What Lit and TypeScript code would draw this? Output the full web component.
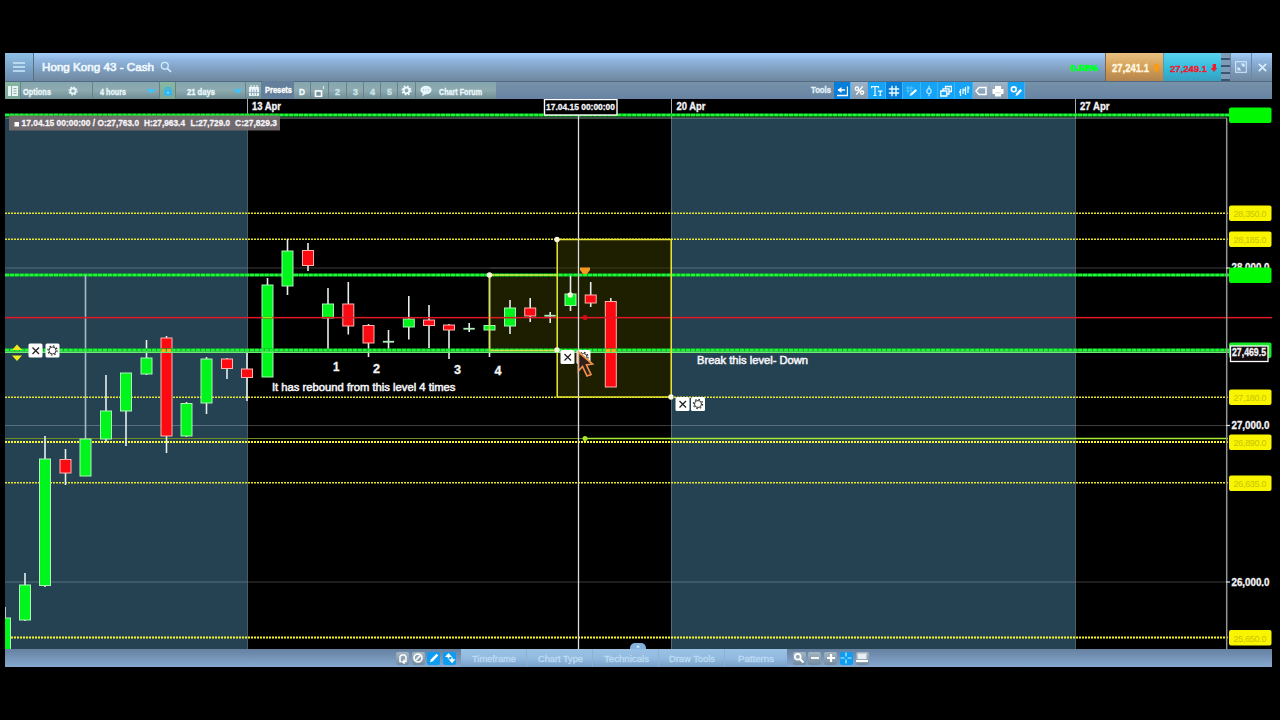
import { LitElement, html, svg, css } from "lit";
import { customElement } from "lit/decorators.js";

type Candle = [number, number, number, number, number, "g" | "r"];

// centre x, body top, body bottom, high, low, direction
const CANDLES: Candle[] = [
  [5, 618, 660, 607, 660, "g"],
  [25, 585, 620, 573, 621, "g"],
  [45, 459, 585.5, 436, 587, "g"],
  [65.5, 459.5, 473, 449, 485, "r"],
  [85.5, 439, 476, 275, 476, "g"],
  [106, 411, 439, 375, 442, "g"],
  [126, 373, 411, 373, 446, "g"],
  [146.5, 358, 374, 340, 375, "g"],
  [166.5, 338, 436, 336, 453, "r"],
  [186.5, 403.5, 436, 402, 437, "g"],
  [206.5, 359, 403, 357, 414, "g"],
  [227, 359, 368.5, 358, 379, "r"],
  [247, 369, 377.5, 353, 401, "r"],
  [267.5, 285, 377, 278, 377, "g"],
  [287.5, 251, 286, 239, 295, "g"],
  [308, 250.5, 265.5, 243, 271, "r"],
  [328, 304, 318, 288, 350, "g"],
  [348.3, 304, 326, 282, 334.5, "r"],
  [368.5, 325.5, 343, 324, 357, "r"],
  [388.5, 341, 342.5, 330, 350, "g"],
  [408.8, 319, 327, 296, 339.5, "g"],
  [429, 320, 325.5, 305, 348, "r"],
  [449, 325, 330, 324, 359, "r"],
  [469.2, 328, 329.5, 323, 332, "g"],
  [489.5, 325.5, 330, 275, 357, "g"],
  [510, 308, 326, 300, 334, "g"],
  [530.2, 308, 316, 298, 322, "r"],
  [550.2, 315, 316.5, 312, 323, "g"],
  [570.5, 294, 305.5, 276, 311, "g"],
  [590.7, 295, 303, 282, 307, "r"],
  [610.8, 301.5, 387, 298, 387, "r"],
];

const GEAR = svg`<circle cx="6" cy="6" r="3.100" fill="none" stroke="currentColor" stroke-width="2"/>
  <circle cx="6" cy="6" r="4.700" fill="none" stroke="currentColor" stroke-width="1.600" stroke-dasharray="1.850 1.850"/>`;

const icon = (body: unknown, size = 12) =>
  html`<svg width=${size} height=${size} viewBox="0 0 12 12">${body}</svg>`;

const label = (text: string, width: number, size: number, cls = "") =>
  html`<svg class="label ${cls}" width=${width} height="16" viewBox="0 0 ${width} 16">
    <text x="0" y="11.5" font-size=${size} textLength=${width} lengthAdjust="spacingAndGlyphs">${text}</text>
  </svg>`;

const I = {
  panel: svg`<path d="M1 1h10v10H1z" fill="#e9f6f3"/><path d="M4.500 1v10M6.500 3.500h3M6.500 6h3M6.500 8.500h3" stroke="#89aaad" stroke-width="1"/>`,
  down: svg`<path d="M.5 3.500h11L6 9.500z" fill="#3cc4fa"/>`,
  lock: svg`<path d="M1.500 4.500h9v7h-9z" fill="#2db8f5"/><path d="M4 5V2h4v3" fill="none" stroke="#2db8f5" stroke-width="1.800"/><path d="M5 7h2v2H5z" fill="#8be4f5"/>`,
  cal: svg`<path d="M1 2h10v9H1z" fill="#e6f3f8"/><path d="M3 0v3M6 0v3M9 0v3" stroke="#fff"/><path d="M3.500 4.500v6M6 4.500v6M8.500 4.500v6M1 7.500h10" stroke="#88a5b7" stroke-width=".8"/>`,
  chat: svg`<ellipse cx="6" cy="5" rx="5.600" ry="4.200" fill="#e6f7fb"/><path d="M3 8l-1 3.500L6 9z" fill="#e6f7fb"/><path d="M3 5h1M5.500 5h1M8 5h1" stroke="#8cabb9"/>`,
  back: svg`<path d="M2 5h7M1 10.500h10.500V1.500" fill="none" stroke="#fff" stroke-width="1.300"/><path d="M5.500 2v6L1.500 5z" fill="#fff"/>`,
  pct: svg`<path d="M2.500 10.500L9.500 1.500" stroke="#fff" stroke-width="1.500"/><circle cx="3.200" cy="4" r="1.800" fill="none" stroke="#fff" stroke-width="1.500"/><circle cx="8.800" cy="8.300" r="1.800" fill="none" stroke="#fff" stroke-width="1.500"/>`,
  type: svg`<path d="M.5 3.200V1.700h7v1.500M4 2v8.500M2.500 10.500h3M7 6.200h4.600M9.300 6v4.500M8.300 10.500h2" stroke="#e8fbff" stroke-width="1.200" fill="none"/>`,
  hash: svg`<path d="M4 .8v10.400M8 .8v10.400M.8 4h10.400M.8 8h10.400" stroke="#e9faff" stroke-width="1.400"/>`,
  gridpen: svg`<path d="M3 1v8M6 1v5M1 3h8M1 6h6" stroke="#5cc6f7" stroke-width=".9"/><path d="M4.500 11l1-2.500 5-4.500 1.500 1.700-5 4.500z" fill="#e8fbff"/>`,
  candle: svg`<path d="M6 .8v2.200M6 9v2.200M6 3L8 5v2.500L6 9 4 7.500V5z" stroke="#a8e9ff" stroke-width="1.300" fill="none"/>`,
  layers: svg`<path d="M.8 6h6v5h-6zM3 6V3.800h6V9H7M5.500 3.800V1.500h6v5H9" fill="none" stroke="#fff" stroke-width="1.300"/>`,
  bars: svg`<path d="M2.500 4v7M1 7h1.500M5 3.500V9M5 5h2M7.500 2v8M10 1v7M10 3h1.500" stroke="#dff8ff" stroke-width="1.300"/>`,
  tag: svg`<path d="M1 6l3-3.500h7v7H4z" fill="none" stroke="#fff" stroke-width="1.500"/>`,
  print: svg`<path d="M3 1h6v3h2.500v5H9v2.500H3V9H.5V4H3z" fill="#fff"/><path d="M3.500 7.800h5" stroke="#c4d2de"/>`,
  cogpen: svg`<circle cx="3.800" cy="4.300" r="2.400" fill="none" stroke="#fff" stroke-width="1.600"/><path d="M5.500 11l.8-2.700 4-4.300 1.700 1.700-4.200 4.500z" fill="#fff"/>`,
  search: svg`<circle cx="4.800" cy="4.800" r="3.400" fill="none" stroke="#cfe9ff" stroke-width="1.400"/><path d="M7.300 7.300L11 11" stroke="#cfe9ff" stroke-width="1.700"/>`,
  zoom: svg`<circle cx="4.800" cy="4.800" r="2.900" fill="none" stroke="#fff" stroke-width="1.700"/><path d="M7 7l3.500 3.500" stroke="#fff" stroke-width="2"/>`,
  reload: svg`<path d="M4.500 9.500H3V4.500L4.500 3H7.500L9 4.500V9.500H7M7 7.500v3.500L5 9.500" fill="none" stroke="#fff" stroke-width="1.500"/>`,
  ban: svg`<circle cx="6" cy="6" r="4" fill="none" stroke="#fff" stroke-width="1.600"/><path d="M3.500 8.500l5-5" stroke="#fff" stroke-width="1.600"/>`,
  pen: svg`<path d="M2 10.200l1-3 5.500-5.400L10.300 3.500 4.800 9.200z" fill="#fff"/>`,
  updown: svg`<path d="M4.500 1L8 5H1zM8 11.200L11.500 7.200H4.500z" fill="#fff"/><path d="M4.500 4.500v2M8 5.500v2" stroke="#fff" stroke-width="1.600"/>`,
  minus: svg`<path d="M2 6h8" stroke="#fff" stroke-width="1.800"/>`,
  plus: svg`<path d="M2 6h8M6 2v8" stroke="#fff" stroke-width="2.200"/>`,
  cross: svg`<path d="M6 .5v4M6 7.500v4M.5 6h4M7.500 6h4" stroke="#c2f2ff" stroke-width="1.200"/>`,
  screen: svg`<path d="M1.500 1.500h9v5.500h-9z" fill="#e6eef4"/><path d="M0 9h12" stroke="#fff" stroke-width="2.200"/>`,
};

@customElement("app-root")
export class AppRoot extends LitElement {
  static styles = css`
    :host { display: flex; flex-direction: column; box-sizing: border-box; width: 1280px; height: 720px;
      padding: 53px 8px 53px 5px; background: #000; color: #fff; font-family: "Liberation Sans", Arial, sans-serif; overflow: hidden; }
    svg { display: block; flex: none; }
    .label { overflow: visible; }
    .label text { fill: currentColor; stroke: currentColor; stroke-width: .35px; font-weight: 700; }
    .label.thin text { font-weight: 400; stroke-width: .65px; }
    .label.faint text { stroke-width: .3px; }
    .header { display: flex; height: 28px; flex: none; background: linear-gradient(#a3cffa 0, #8fb5df 25%, #7895b1 75%, #6f87a0); }
    .burger { width: 28px; display: flex; align-items: center; justify-content: center; border-right: 1px solid #566f8b; background: linear-gradient(#8fc0e6, #6b8bad); }
    .title { display: flex; align-items: center; gap: 6px; padding-left: 8px; flex: 1; color: #edf8ff; }
    .change { display: flex; align-items: center; color: #00ff2a; padding-right: 7px; }
    .change .label text { stroke-width: .7px; }
    .price { display: flex; align-items: center; width: 57px; box-sizing: border-box; padding: 1px 0 0 6px; gap: 3px; }
    .sell { background: linear-gradient(#e9c184, #cf9b51 60%, #b28350); border-left: 1px solid #7b6550; color: #fff7e0; width: 58px; }
    .buy { background: linear-gradient(#5bd3ee, #30bada 60%, #3a9ec0); color: #f01d2e; width: 58px; border-left: 1px solid #5c98a5; }
    .grip { width: 9px; background: repeating-linear-gradient(#7e9bb8 0 5px, #3d566f 5px 7px); }
    .wbtn { width: 21px; display: flex; align-items: center; justify-content: center; color: #d9ecff; border-left: 1px solid #6c87a8; box-sizing: border-box; }
    .toolbar { display: flex; flex: none; background: linear-gradient(#7792a9, #6683a3); border-top: 1px solid #536b82; box-sizing: border-box; height: 18px; }
    .seg { display: flex; align-items: center; box-sizing: border-box; border-right: 1px solid #66818f; background: linear-gradient(#86a6ae, #8daaaf 50%, #6e8b94); justify-content: space-between; color: #eaf8fc; flex: none; }
    .seg.num { justify-content: center; color: #c8e4ec; }
    .seg.bright { color: #f2fbff; }
    .seg.start { background: linear-gradient(#88b9a2, #7ba598); }
    .plain { display: flex; align-items: flex-start; justify-content: center; width: 32px; background: #637f9b; padding-bottom: 2px; box-sizing: border-box; margin-top: -1px; }
    .w16 { width: 16px; justify-content: center; }
    .opts { width: 72px; padding: 0 14px 0 2px; }
    .hours { width: 67px; padding: 0 3px 0 7px; }
    .days { width: 70px; padding: 0 2px 0 11px; }
    .w17 { width: 17px; }
    .w18 { width: 18px; }
    .forum { width: 80px; padding: 0 14px 0 4px; border: 0; }
    .tools { display: flex; margin-left: auto; margin-right: 247px; align-items: center; }
    .tools .label { margin: -3px 3px 0 0; color: #e6f2fa; }
    .tool { width: 17.400px; height: 17px; display: flex; align-items: center; justify-content: center; box-sizing: border-box; background: #16a2f5; border-right: 1px solid #3db5f7; }
    .tool.dark { background: #087edb; }
    .tool.gray { background: linear-gradient(#9db4c8, #8299af); border-color: #8da4ba; }
    .chart { width: 1267px; height: 550px; }
    .chart text { font-size: 10px; fill: #f4f4f8; stroke: #f4f4f8; stroke-width: .3px; }
    .footer { position: relative; display: flex; height: 18px; box-sizing: border-box; align-items: center; padding-left: 391px; background: linear-gradient(#6680a0, #86a9d0); }
    .mini { width: 13px; height: 13px; display: flex; align-items: center; justify-content: center; background: linear-gradient(#a5b6c3, #738ba0); border-radius: 2px; margin-right: 2.700px; }
    .mini.on { background: #0d9cf2; }
    .tabs { display: flex; width: 326px; height: 18px; margin: 0 6px 0 2px; background: linear-gradient(#9bc2e4, #91b9df 55%, #779ec6); }
    .tab { width: 66px; box-sizing: border-box; display: flex; align-items: center; justify-content: center; border-right: 1px solid #8cb1d4; color: #bddcf4; padding-left: 2px; }
    .tab:last-child { border: 0; width: 62px; padding: 0; }
    .handle { position: absolute; left: 625px; top: -6px; width: 16px; height: 6px; border-radius: 5px 5px 0 0; background: #83b2dc; display: flex; justify-content: center; }
  `;

  private seg(cls: string, body: unknown) {
    return html`<div class="seg ${cls}">${body}</div>`;
  }

  private candle([x, top, bottom, high, low, dir]: Candle) {
    const doji = bottom - top < 3;
    return svg`<path d="M${x} ${high}V${low}" stroke=${x === 85.5 ? "#a9b9c1" : "#e4efee"} stroke-width="1.600"/>
      <rect x=${x - 5.5} y=${top} width="11" height=${bottom - top} fill=${doji ? "#b7e8bd" : dir === "g" ? "#00f51c" : "#fb0a12"}
        stroke=${dir === "g" ? "#a8f7b5" : "#ffb2ae"} stroke-width=${doji ? 0.3 : 1}/>`;
  }

  private dotted(y: number, thick = false) {
    return svg`<path d="M5 ${y + 0.3}H1228" stroke=${thick ? "#f7f72c" : "#e6e62a"} stroke-width=${thick ? 2 : 1.5} stroke-dasharray="2 1"/>`;
  }

  private green(y: number) {
    return svg`<path d="M5 ${y}H1229" stroke="#07a51c" stroke-width="3.200"/>
      <path d="M5 ${y}H1229" stroke="#20f53a" stroke-width="2.600" stroke-dasharray="4 .9"/>`;
  }

  private button(x: number, y: number, gear: boolean) {
    return svg`<g transform="translate(${x} ${y})"><rect width="14" height="14" rx="1.500" fill="#fff"/>
      ${gear
        ? svg`<circle cx="7" cy="7" r="3.500" fill="none" stroke="#333" stroke-width="1"/><circle cx="7" cy="7" r="4.600" fill="none" stroke="#333" stroke-width="1.200" stroke-dasharray="1.600 2"/>`
        : svg`<path d="M4 4l6.500 6.500M10.500 4L4 10.500" stroke="#222" stroke-width="1.300"/>`}</g>`;
  }

  private badge(y: number, color: string, text = "") {
    return svg`<rect x="1229" y=${y - 7.5} width="42.500" height="15.500" rx="2" fill=${color}/>
      ${text ? svg`<text x="1233.500" y=${y + 4} textLength="33" style="fill:#cbc400;stroke:none;font-size:9px">${text}</text>` : ""}`;
  }

  private text(x: number, y: number, width: number, value: string, size = 10, weight = 700) {
    return svg`<text x=${x} y=${y} textLength=${width} lengthAdjust="spacingAndGlyphs" font-weight=${weight}
      style="font-size:${size}px;stroke-width:${weight === 400 ? 0.5 : 0.3}px">${value}</text>`;
  }

  private chart() {
    return html`<svg class="chart" viewBox="5 99 1267 550" preserveAspectRatio="none">
      <rect x="5" y="99" width="1267" height="550" fill="#000"/>
      <rect x="5" y="118" width="242.500" height="531" fill="#254252"/>
      <rect x="671" y="118" width="404.500" height="531" fill="#254252"/>
      ${[268, 425.5, 582].map((y) => svg`<path d="M5 ${y}H1228" stroke="#fff" stroke-opacity=".24"/>`)}
      ${[247.5, 671.5, 1075.5].map((x) => svg`<path d="M${x} 99V118" stroke="#a5adb1"/><path d="M${x} 118V649" stroke="#87969c" stroke-opacity=".5"/>`)}
      <path d="M5 118H1227" stroke="#7f9188"/>
      ${this.green(115)}
      ${this.dotted(213)}${this.dotted(239)}${this.dotted(397)}${this.dotted(441.7, true)}${this.dotted(482.5)}${this.dotted(637.2, true)}
      <rect x="490" y="275" width="67" height="75.500" fill="#1d1d00"/>
      <rect x="557" y="239" width="114" height="158" fill="#1e1e00"/>
      <path d="M490 268H671" stroke="#fff" stroke-opacity=".13"/>
      <path d="M5 438.500H585" stroke="#6d8c25"/>
      <path d="M585 438.500H1228" stroke="#a2ea35" stroke-width="1.400"/>
      ${this.green(275)}
      ${CANDLES.map((c) => this.candle(c))}
      <rect x="5" y="316.900" width="1267" height="1.500" fill="#e01826"/>
      ${this.green(350)}
      <path d="M5 352.300H1229" stroke="#68ef72" stroke-width="1.400"/>
      <path d="M161.500 350.500h10M606 350.500h10" stroke="#ffae14" stroke-width="3" stroke-dasharray="4 1.500"/>
      <path d="M262.500 317.500h10" stroke="#a6e51c"/>
      <path d="M489.500 350V275H557M489.500 350.500H557" fill="none" stroke="#cfe344" stroke-width="1.400"/>
      <rect x="557.200" y="239.500" width="114" height="157.500" fill="none" stroke="#eaea31" stroke-width="1.500"/>
      ${[[557, 239.5], [489.5, 275], [557, 350], [671, 397], [570.3, 295]].map(([x, y]) => svg`<circle cx=${x} cy=${y} r="2.700" fill="#f7f7dc"/>`)}
      <circle cx="585" cy="317.500" r="2.500" fill="#d60d17"/><circle cx="585" cy="438.500" r="2.500" fill="#a5e832"/>
      <path d="M580 267.500h10v2.500l-3 4h-4l-3-4z" fill="#f49a20"/>
      <path d="M578.500 115V649" stroke="#dcdcdc" stroke-width="1.300"/>
      ${this.button(560.5, 350, false)}${this.button(576.5, 350, true)}
      <path d="M578.500 352l14 12-6 1 4.500 9.500-4 1.500-4.500-9.500-4 4.500z" fill="#33201a" stroke="#ef9148" stroke-width="1.700"/>
      <path d="M578.300 350V378" stroke="#c8c8c8" stroke-width=".9"/>
      ${this.button(675.5, 397, false)}${this.button(691, 397, true)}
      ${this.button(28.5, 343.5, false)}${this.button(45.5, 343.5, true)}
      <path d="M12 350l5-5.500 5 5.500zM12 355.500h10l-5 5.500z" fill="#f2ea18"/>
      <path d="M1226.700 118V649" stroke="#959595" stroke-width="1.500"/>
      ${[268, 425.5, 582].map((y) => svg`<path d="M1226 ${y}h4" stroke="#ddd" stroke-width="1.300"/>`)}
      ${this.text(1231.5, 271, 38, "28,000.0")}
      ${this.text(1231.5, 429, 38, "27,000.0")}
      ${this.text(1231.5, 585.5, 38, "26,000.0")}
      ${this.badge(115, "#00f900")}${this.badge(275, "#00f900")}${this.badge(350, "#15e928")}
      ${this.badge(213, "#f9f500", "28,350.0")}${this.badge(239, "#f9f500", "28,185.0")}${this.badge(397, "#f9f500", "27,180.0")}
      ${this.badge(442, "#f9f500", "26,890.0")}${this.badge(483, "#f9f500", "26,635.0")}${this.badge(637.5, "#f9f500", "25,650.0")}
      <rect x="1230.500" y="346" width="37.500" height="15.500" fill="#120b0d" stroke="#fff" stroke-width="1.300"/>
      ${this.text(1232, 356, 34, "27,469.5")}
      ${this.text(252, 110, 29, "13 Apr")}
      ${this.text(676.5, 110, 29, "20 Apr")}
      ${this.text(1080, 110, 29.5, "27 Apr")}
      <rect x="544.500" y="99.500" width="72.500" height="15.500" fill="#000" stroke="#fff" stroke-width="1.400"/>
      ${this.text(546, 109.5, 69, "17.04.15 00:00:00", 9)}
      <rect x="9" y="115.500" width="271" height="15" fill="#766c70" fill-opacity=".92"/>
      <path d="M9 115.500H280" stroke="#42b54b" stroke-width="1.200" stroke-dasharray="3 2"/>
      <rect x="14.500" y="122" width="4.500" height="4.500" fill="#fff"/>
      ${this.text(21.5, 126, 73.5, "17.04.15 00:00:00 /", 8.5)}
      ${this.text(97.5, 126, 41.5, "O:27,763.0", 8.5)}
      ${this.text(144, 126, 41, "H:27,963.4", 8.5)}
      ${this.text(190.5, 126, 39.5, "L:27,729.0", 8.5)}
      ${this.text(235, 126, 42, "C:27,829.3", 8.5)}
      ${this.text(333, 371, 6.5, "1", 12)}${this.text(373, 373, 7, "2", 12)}${this.text(454, 374, 7, "3", 12)}${this.text(494.5, 374.5, 7, "4", 12)}
      ${this.text(272, 391, 183.5, "It has rebound from this level 4 times", 10.5, 400)}
      ${this.text(697, 364, 111, "Break this level- Down", 10.5, 400)}
    </svg>`;
  }

  render() {
    return html`
      <div class="header">
        <div class="burger">${icon(svg`<path d="M0 2h12M0 6h12M0 10h12" stroke="#c9eafc" stroke-width="1.300"/>`)}</div>
        <div class="title">${label("Hong Kong 43 - Cash", 112, 11.5, "thin")}${icon(I.search)}</div>
        <div class="change">${label("0.58%", 28, 9.5)}</div>
        <div class="price sell">${label("27,241.1", 37, 10)}${icon(svg`<path d="M6 0l5 5H8.500v6h-5V5H1z" fill="#ff9a0c"/>`, 9)}</div>
        <div class="price buy">${label("27,249.1", 37, 9.5, "thin")}${icon(svg`<path d="M4 0h5v6h2l-5 6-5-6h3z" fill="#f01d2e"/>`, 8)}</div>
        <div class="grip"></div>
        <div class="wbtn">${icon(svg`<rect x=".7" y=".7" width="10.600" height="10.600" fill="none" stroke="currentColor"/><path d="M6 3h3v3M6 9H3V6M9 3L7 5M3 9l2-2" fill="none" stroke="currentColor" stroke-width="1.200"/>`)}</div>
        <div class="wbtn">${icon(svg`<path d="M2 2l8 8M10 2l-8 8" stroke="currentColor" stroke-width="1.800"/>`, 11)}</div>
      </div>
      <div class="toolbar">
        ${this.seg("w16 start", icon(I.panel))}
        ${this.seg("opts", html`${label("Options", 28, 8.5)}${icon(GEAR, 10)}`)}
        ${this.seg("hours", html`${label("4 hours", 26, 8.5)}${icon(I.down, 10)}`)}
        ${this.seg("w16 start", icon(I.lock, 10))}
        ${this.seg("days", html`${label("21 days", 28, 8.5)}${icon(I.down, 10)}`)}
        ${this.seg("w16", icon(I.cal))}
        <div class="plain">${label("Presets", 27, 8.5)}</div>
        ${this.seg("num bright w17", label("D", 6, 9))}
        ${this.seg("num w18", icon(svg`<rect x="1.500" y="6" width="6" height="5.500" fill="#74929a" stroke="#fff" stroke-width="1.600"/><path d="M9.500 1v3" stroke="#dceff4"/>`))}
        ${this.seg("num w18", label("2", 5, 8.5))}
        ${this.seg("num w17", label("3", 5, 8.5))}
        ${this.seg("num w17", label("4", 5, 8.5))}
        ${this.seg("num w17", label("5", 5, 8.5))}
        ${this.seg("num bright w18", icon(GEAR, 11))}
        ${this.seg("forum", html`${icon(I.chat)}${label("Chart Forum", 43, 8.5)}`)}
        <div class="tools">
          ${label("Tools", 20, 8.5)}
          <div class="tool dark">${icon(I.back)}</div>
          <div class="tool gray">${icon(I.pct, 11)}</div>
          <div class="tool">${icon(I.type)}</div>
          <div class="tool dark">${icon(I.hash)}</div>
          <div class="tool">${icon(I.gridpen)}</div>
          <div class="tool">${icon(I.candle)}</div>
          <div class="tool">${icon(I.layers)}</div>
          <div class="tool">${icon(I.bars)}</div>
          <div class="tool gray">${icon(I.tag)}</div>
          <div class="tool gray">${icon(I.print)}</div>
          <div class="tool">${icon(I.cogpen)}</div>
        </div>
      </div>
      ${this.chart()}
      <div class="footer">
        <div class="mini">${icon(I.reload)}</div>
        <div class="mini">${icon(I.ban)}</div>
        <div class="mini on">${icon(I.pen)}</div>
        <div class="mini on">${icon(I.updown)}</div>
        <div class="tabs">
          <div class="tab">${label("Timeframe", 44, 9, "thin faint")}</div>
          <div class="tab">${label("Chart Type", 45, 9, "thin faint")}</div>
          <div class="tab">${label("Technicals", 45, 9, "thin faint")}</div>
          <div class="tab">${label("Draw Tools", 46, 9, "thin faint")}</div>
          <div class="tab">${label("Patterns", 36, 9, "thin faint")}</div>
        </div>
        <div class="mini">${icon(I.zoom)}</div>
        <div class="mini">${icon(I.minus)}</div>
        <div class="mini">${icon(I.plus)}</div>
        <div class="mini on">${icon(I.cross)}</div>
        <div class="mini">${icon(I.screen)}</div>
        <div class="handle">${icon(svg`<path d="M2 9l4-5 4 5z" fill="#d3efff"/>`, 6)}</div>
      </div>
    `;
  }
}
